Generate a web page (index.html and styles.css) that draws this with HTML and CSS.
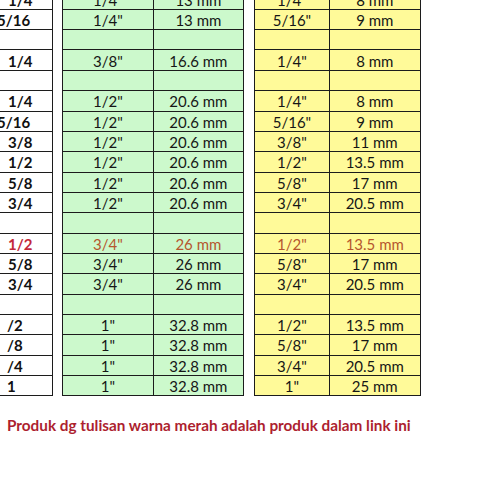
FILE: index.html
```html
<!DOCTYPE html>
<html>
<head>
<meta charset="utf-8">
<link rel="stylesheet" href="styles.css">
</head>
<body>
<div class="sheet">
  <div class="tbl labels">
    <div class="c">1/4</div>
    <div class="c cut">5/16</div>
    <div class="c"></div>
    <div class="c">1/4</div>
    <div class="c"></div>
    <div class="c">1/4</div>
    <div class="c cut">5/16</div>
    <div class="c">3/8</div>
    <div class="c">1/2</div>
    <div class="c">5/8</div>
    <div class="c">3/4</div>
    <div class="c"></div>
    <div class="c red">1/2</div>
    <div class="c">5/8</div>
    <div class="c">3/4</div>
    <div class="c"></div>
    <div class="c part">/2</div>
    <div class="c part">/8</div>
    <div class="c part">/4</div>
    <div class="c part">1</div>
  </div>
  <div class="tbl green">
    <div class="c">1/4"</div><div class="c">13 mm</div>
    <div class="c">1/4"</div><div class="c">13 mm</div>
    <div class="c"></div><div class="c"></div>
    <div class="c">3/8"</div><div class="c">16.6 mm</div>
    <div class="c"></div><div class="c"></div>
    <div class="c">1/2"</div><div class="c">20.6 mm</div>
    <div class="c">1/2"</div><div class="c">20.6 mm</div>
    <div class="c">1/2"</div><div class="c">20.6 mm</div>
    <div class="c">1/2"</div><div class="c">20.6 mm</div>
    <div class="c">1/2"</div><div class="c">20.6 mm</div>
    <div class="c">1/2"</div><div class="c">20.6 mm</div>
    <div class="c"></div><div class="c"></div>
    <div class="c hl">3/4"</div><div class="c hl">26 mm</div>
    <div class="c">3/4"</div><div class="c">26 mm</div>
    <div class="c">3/4"</div><div class="c">26 mm</div>
    <div class="c"></div><div class="c"></div>
    <div class="c">1"</div><div class="c">32.8 mm</div>
    <div class="c">1"</div><div class="c">32.8 mm</div>
    <div class="c">1"</div><div class="c">32.8 mm</div>
    <div class="c">1"</div><div class="c">32.8 mm</div>
  </div>
  <div class="tbl yellow">
    <div class="c">1/4"</div><div class="c">8 mm</div>
    <div class="c">5/16"</div><div class="c">9 mm</div>
    <div class="c"></div><div class="c"></div>
    <div class="c">1/4"</div><div class="c">8 mm</div>
    <div class="c"></div><div class="c"></div>
    <div class="c">1/4"</div><div class="c">8 mm</div>
    <div class="c">5/16"</div><div class="c">9 mm</div>
    <div class="c">3/8"</div><div class="c">11 mm</div>
    <div class="c">1/2"</div><div class="c">13.5 mm</div>
    <div class="c">5/8"</div><div class="c">17 mm</div>
    <div class="c">3/4"</div><div class="c">20.5 mm</div>
    <div class="c"></div><div class="c"></div>
    <div class="c hl">1/2"</div><div class="c hl">13.5 mm</div>
    <div class="c">5/8"</div><div class="c">17 mm</div>
    <div class="c">3/4"</div><div class="c">20.5 mm</div>
    <div class="c"></div><div class="c"></div>
    <div class="c">1/2"</div><div class="c">13.5 mm</div>
    <div class="c">5/8"</div><div class="c">17 mm</div>
    <div class="c">3/4"</div><div class="c">20.5 mm</div>
    <div class="c">1"</div><div class="c">25 mm</div>
  </div>
</div>
<p class="note">Produk dg tulisan warna merah adalah produk dalam link ini</p>
</body>
</html>
```

FILE: styles.css
```css
html, body {
  margin: 0;
  padding: 0;
  background: #ffffff;
}
body {
  font-family: Lato, "Open Sans", sans-serif;
  font-size: 15px;
  color: #161616;
  width: 481px;
  height: 481px;
  overflow: hidden;
}
.sheet {
  display: flex;
  align-items: flex-start;
  margin-top: -10.55px;
}
.tbl {
  display: grid;
  grid-auto-rows: 20.35px;
  box-sizing: border-box;
}
.c {
  box-sizing: border-box;
  border-right: 1px solid #1c1c1c;
  border-bottom: 1px solid #1c1c1c;
  display: flex;
  align-items: center;
  justify-content: center;
  padding-top: 2px;
  white-space: nowrap;
  line-height: 1;
}
.labels {
  grid-template-columns: 53.2px;
  font-weight: 700;
  color: #111;
}
.labels .c {
  justify-content: flex-start;
  padding-left: 8px;
}
.labels .cut {
  padding-left: 0;
  text-indent: -3px;
}
.labels .part {
  padding-left: 7px;
}
.labels .red {
  color: #c3283a;
}
.green {
  margin-left: 9px;
  border-left: 1px solid #1c1c1c;
  grid-template-columns: 90.6px 90.2px;
  background: #ccf9cc;
}
.yellow {
  margin-left: 10.2px;
  border-left: 1px solid #1c1c1c;
  grid-template-columns: 74.6px 91px;
  background: #fffa99;
}
.hl {
  color: #b5562e;
}
.note {
  margin: 20px 0 0 7px;
  font-weight: 700;
  font-size: 15.3px;
  color: #ad1f2f;
}
```
